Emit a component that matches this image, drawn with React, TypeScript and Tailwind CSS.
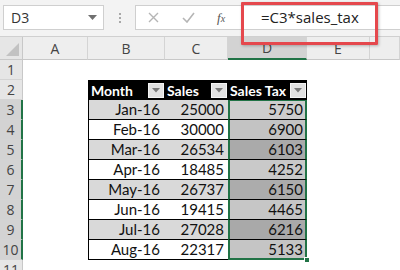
import React from 'react';

const rows = [
  { month: 'Jan-16', sales: 25000, tax: 5750, taxBg: 'bg-[#cdcdcd]' },
  { month: 'Feb-16', sales: 30000, tax: 6900, taxBg: 'bg-[#c3c3c3]' },
  { month: 'Mar-16', sales: 26534, tax: 6103, taxBg: 'bg-[#aaaaaa]' },
  { month: 'Apr-16', sales: 18485, tax: 4252, taxBg: 'bg-[#c9c9c9]' },
  { month: 'May-16', sales: 26737, tax: 6150, taxBg: 'bg-[#acacac]' },
  { month: 'Jun-16', sales: 19415, tax: 4465, taxBg: 'bg-[#c6c6c6]' },
  { month: 'Jul-16', sales: 27028, tax: 6216, taxBg: 'bg-[#a9a9a9]' },
  { month: 'Aug-16', sales: 22317, tax: 5133, taxBg: 'bg-[#c5c5c5]' },
];

const uiFont = "font-['Open_Sans',sans-serif]";
const cellFont = "font-['Lato',sans-serif]";

const FilterButton = () => (
  <div className="w-[16px] h-[15px] shrink-0 bg-[#e1e1e1] border border-[#f4f4f4] flex items-center justify-center">
    <svg width="8" height="5" viewBox="0 0 8 5">
      <path d="M0 0 L8 0 L4 4.5 Z" fill="#7a7a7a" />
    </svg>
  </div>
);

const RowHead = ({ n, active }: { n: number; active?: boolean }) => (
  <div
    className={`h-[20px] flex items-center justify-center border-b border-[#d4d4d4] text-[14px] text-[#444] ${uiFont} ${
      active ? 'bg-[#d3d3d3] border-r-2 border-r-[#217346]' : 'bg-[#e6e6e6] border-r border-r-[#c8c8c8]'
    }`}
  >
    {n}
  </div>
);

const HeadCell = ({ label, first }: { label: string; first?: boolean }) => (
  <div
    className={`h-[20px] bg-black flex items-center justify-between pr-[1px] text-white font-bold text-[14px] whitespace-nowrap ${cellFont} ${
      first ? 'border-l border-black pl-[2px]' : 'pl-[2px]'
    }`}
  >
    <span>{label}</span>
    <FilterButton />
  </div>
);

export default function App() {
  return (
    <div className="w-[400px] h-[270px] overflow-hidden bg-white">
      {/* formula bar */}
      <div className="h-[37px] bg-[#f3f3f3] border-b border-[#d0d0d0] flex items-start pt-[5px] pl-[3px] relative">
        <div className={`w-[101px] h-[25px] bg-white border border-[#cfcfcf] flex items-center justify-between pl-[7px] pr-[6px] text-[14px] text-[#333] ${uiFont}`}>
          <span>D3</span>
          <svg width="9" height="5" viewBox="0 0 9 5">
            <path d="M0 0 L9 0 L4.5 5 Z" fill="#707070" />
          </svg>
        </div>
        <div className="w-[31px] h-[25px] flex flex-col items-center justify-center gap-[2px]">
          <span className="w-[2px] h-[2px] bg-[#a8a8a8]" />
          <span className="w-[2px] h-[2px] bg-[#a8a8a8]" />
          <span className="w-[2px] h-[2px] bg-[#a8a8a8]" />
        </div>
        <div className="flex-1 h-[25px] bg-white border border-[#cfcfcf] border-r-0 flex items-center">
          <div className="w-[106px] flex items-center">
            <svg className="ml-[12px]" width="11" height="11" viewBox="0 0 11 11">
              <path d="M1 1 L10 10 M10 1 L1 10" stroke="#b5b5b5" strokeWidth="1.4" />
            </svg>
            <svg className="ml-[23px]" width="13" height="11" viewBox="0 0 13 11">
              <path d="M1 6 L5 10 L12 1" stroke="#b5b5b5" strokeWidth="1.6" fill="none" />
            </svg>
            <span className="ml-[22px] text-[13px] italic text-[#555] font-['Liberation_Serif',serif]">
              f<span className="text-[10px]">x</span>
            </span>
          </div>
          <span className={`ml-[19px] text-[15px] text-[#222] ${uiFont}`}>=C3*sales_tax</span>
        </div>
        <div className="absolute left-[241px] top-[2px] w-[137px] h-[43px] border-[3px] border-[#e5484d] rounded-[1px] shadow-[1px_1px_3px_rgba(0,0,0,0.25)]" />
      </div>

      {/* sheet */}
      <div className="grid grid-cols-[23px_65px_77px_63px_79px_63px_1fr]">
        {/* column headers */}
        <div className="h-[23px] bg-[#e6e6e6] border-r border-b border-[#c8c8c8] relative">
          <svg className="absolute right-[3px] bottom-[3px]" width="13" height="13" viewBox="0 0 13 13">
            <path d="M13 0 L13 13 L0 13 Z" fill="#c2c2c2" />
          </svg>
        </div>
        {['A', 'B', 'C', 'D', 'E', ''].map((c) => (
          <div
            key={c || 'F'}
            className={`h-[23px] flex items-center justify-center text-[14px] text-[#444] ${uiFont} border-r border-[#d4d4d4] ${
              c === 'D' ? 'bg-[#d3d3d3] border-b-2 border-b-[#217346]' : 'bg-[#eeeeee] border-b border-b-[#c8c8c8]'
            }`}
          >
            {c}
          </div>
        ))}

        {/* row 1 */}
        <RowHead n={1} />
        <div className="col-span-6" />

        {/* row 2: table header */}
        <RowHead n={2} />
        <div />
        <HeadCell label="Month" first />
        <HeadCell label="Sales" />
        <HeadCell label="Sales Tax" />
        <div className="col-span-2" />

        {rows.map((r, i) => {
          const band = i % 2 === 0 ? 'bg-[#d9d9d9]' : 'bg-white';
          const last = i === rows.length - 1;
          return (
            <React.Fragment key={r.month}>
              <RowHead n={i + 3} active />
              <div />
              <div className={`h-[20px] ${band} border-l border-b border-black flex items-center justify-end pr-[5px] text-[15px] text-[#111] ${cellFont}`}>
                {r.month}
              </div>
              <div className={`h-[20px] ${band} border-b border-black flex items-center justify-end pr-[4px] text-[15px] text-[#111] ${cellFont}`}>
                {r.sales}
              </div>
              <div
                className={`h-[20px] ${r.taxBg} border-x-2 border-x-[#217346] flex items-center justify-end pr-[2px] text-[15px] text-[#111] ${cellFont} relative ${
                  last ? 'border-b-2 border-b-[#217346]' : 'border-b border-b-black'
                } ${i === 0 ? 'shadow-[inset_0_1px_0_#217346]' : ''}`}
              >
                {r.tax}
                {last && <span className="absolute right-[-5px] bottom-[-5px] w-[6px] h-[6px] bg-[#217346] border border-white" />}
              </div>
              <div className="col-span-2" />
            </React.Fragment>
          );
        })}

        {/* row 11 */}
        <RowHead n={11} />
        <div className="col-span-6" />
      </div>
    </div>
  );
}
